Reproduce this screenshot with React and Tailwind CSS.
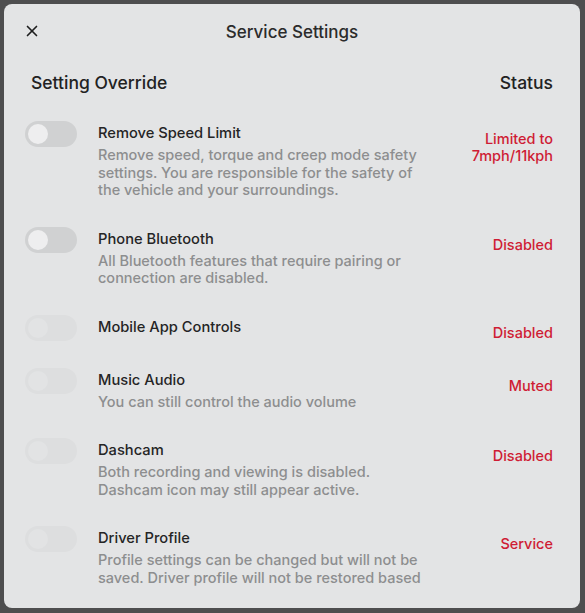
import { X } from 'lucide-react';

const ROWS = [
  {
    title: 'Remove Speed Limit',
    desc: 'Remove speed, torque and creep mode safety settings. You are responsible for the safety of the vehicle and your surroundings.',
    status: ['Limited to', '7mph/11kph'],
    active: true,
  },
  {
    title: 'Phone Bluetooth',
    desc: 'All Bluetooth features that require pairing or connection are disabled.',
    status: ['Disabled'],
    active: true,
  },
  { title: 'Mobile App Controls', desc: null, status: ['Disabled'] },
  { title: 'Music Audio', desc: 'You can still control the audio volume', status: ['Muted'] },
  {
    title: 'Dashcam',
    desc: 'Both recording and viewing is disabled. Dashcam icon may still appear active.',
    status: ['Disabled'],
  },
  {
    title: 'Driver Profile',
    desc: 'Profile settings can be changed but will not be saved. Driver profile will not be restored based',
    status: ['Service'],
  },
];

function Toggle({ active }) {
  return (
    <div
      className={`relative -mb-[3px] -mt-[1px] h-[26px] w-[52px] shrink-0 rounded-full ${active ? 'bg-[#d0d1d2]' : 'bg-[#dddedf]'}`}
    >
      <div
        className={`absolute left-[3px] top-[3px] h-[20px] w-[20px] rounded-full ${active ? 'bg-[#eeeeef]' : 'bg-[#e2e3e4]'}`}
      />
    </div>
  );
}

export default function App() {
  return (
    <div
      className="h-[613px] w-[585px] overflow-hidden bg-[#4e4e4f] pb-[5px] pl-[4px] pr-[5px] pt-[4px]"
      style={{ fontFamily: 'Inter, "Liberation Sans", sans-serif' }}
    >
      <div className="h-full overflow-hidden rounded-[8px] bg-[#e3e4e5]">
        <div className="grid h-[54px] grid-cols-[56px_1fr_56px] items-center">
          <div className="flex justify-center">
            <X size={18} strokeWidth={2.2} className="text-[#1e1e1e]" />
          </div>
          <h1 className="pt-[4px] text-center text-[17px] font-medium text-[#2b2b2b]">Service Settings</h1>
          <div />
        </div>

        <div className="mt-[14px] flex items-center justify-between px-[27px] text-[17.5px] font-medium leading-[22px] text-[#222]">
          <span>Setting Override</span>
          <span>Status</span>
        </div>

        <div className="mt-[28px] flex flex-col gap-[29px] pl-[21px] pr-[27px]">
          {ROWS.map((r) => (
            <div key={r.title} className="flex items-start">
              <Toggle active={r.active} />
              <div className="ml-[21px] w-[326px]">
                <div className="text-[14.7px] font-medium leading-[22px] text-[#252525]">{r.title}</div>
                {r.desc && (
                  <p className="mt-[2px] text-[14.5px] font-medium leading-[17.5px] text-[#8d8e8f]">{r.desc}</p>
                )}
              </div>
              <div className="mb-[-1px] mt-[8px] flex-1 text-right text-[14.5px] font-medium leading-[17px] text-[#cf1c34]">
                {r.status.map((s) => (
                  <div key={s}>{s}</div>
                ))}
              </div>
            </div>
          ))}
        </div>
      </div>
    </div>
  );
}
